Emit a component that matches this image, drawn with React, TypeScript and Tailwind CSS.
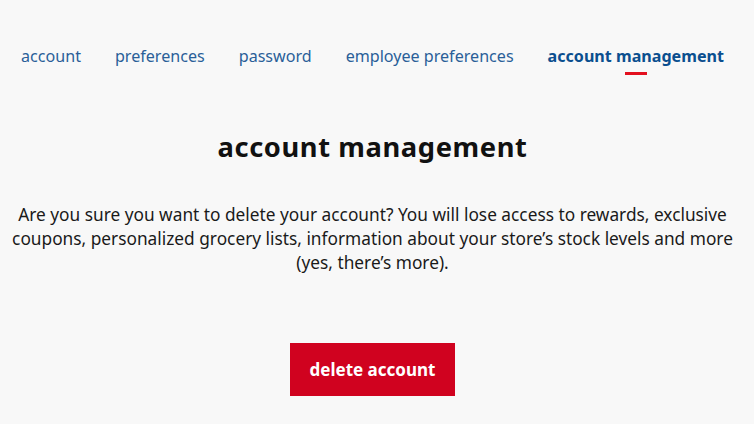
import React from 'react';

const tabs = ['account', 'preferences', 'password', 'employee preferences', 'account management'];

const App: React.FC = () => {
    const active = 'account management';
    return (
        <div className="min-h-[424px] w-full bg-[#f8f8f8] pr-[9px] font-['Noto_Sans',sans-serif] text-[#1a1a1a]">
            <nav className="flex justify-center gap-[34px] pt-[43px]">
                {tabs.map((t) => (
                    <div key={t} className="relative flex flex-col items-center">
                        <span
                            className={
                                t === active
                                    ? 'text-[16.1px] leading-[26px] font-bold text-[#0b4f8f]'
                                    : 'text-[16.1px] leading-[26px] text-[#2a5f98]'
                            }
                        >
                            {t}
                        </span>
                        {t === active && <span className="mt-[3px] h-[3px] w-[22px] bg-[#e3101f]"></span>}
                    </div>
                ))}
            </nav>

            <h1 className="mt-[55px] text-center text-[27.3px] leading-[34px] font-bold tracking-[0.6px] text-[#111]">
                account management
            </h1>

            <p className="mx-auto mt-[39px] px-[8px] text-center text-[17.3px] leading-[24px]">
                Are you sure you want to delete your account? You will lose access to rewards, exclusive coupons, personalized grocery lists, information about your store’s stock levels and more (yes, there’s more).
            </p>

            <div className="mt-[68px] flex justify-center">
                <button className="h-[53px] w-[165px] bg-[#d0021f] text-[17px] font-bold text-white">
                    delete account
                </button>
            </div>
        </div>
    );
};

export default App;
